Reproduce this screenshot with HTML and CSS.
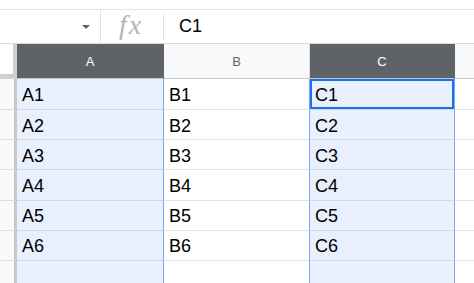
FILE: index.html
```html
<!DOCTYPE html>
<html>
<head>
<meta charset="utf-8">
<link rel="stylesheet" href="styles.css">
</head>
<body>
<div class="fbar">
  <div class="namebox"><span class="caret"></span></div>
  <div class="fxbox"><span class="fx">fx</span><span class="sep"></span></div>
  <div class="formula">C1</div>
</div>
<div class="grid">
  <div class="corner"></div>
  <div class="hd sel">A</div>
  <div class="hd">B</div>
  <div class="hd sel">C</div>
  <div class="hd rest"></div>

  <div class="rh"></div><div class="cell ca">A1</div><div class="cell cb">B1</div><div class="cell cc active">C1</div><div class="cell cr"></div>
  <div class="rh"></div><div class="cell ca">A2</div><div class="cell cb">B2</div><div class="cell cc">C2</div><div class="cell cr"></div>
  <div class="rh"></div><div class="cell ca">A3</div><div class="cell cb">B3</div><div class="cell cc">C3</div><div class="cell cr"></div>
  <div class="rh"></div><div class="cell ca">A4</div><div class="cell cb">B4</div><div class="cell cc">C4</div><div class="cell cr"></div>
  <div class="rh"></div><div class="cell ca">A5</div><div class="cell cb">B5</div><div class="cell cc">C5</div><div class="cell cr"></div>
  <div class="rh"></div><div class="cell ca">A6</div><div class="cell cb">B6</div><div class="cell cc">C6</div><div class="cell cr"></div>
  <div class="rh"></div><div class="cell ca"></div><div class="cell cb"></div><div class="cell cc"></div><div class="cell cr"></div>
</div>
</body>
</html>
```

FILE: styles.css
```css
* { box-sizing: border-box; }
html, body {
  margin: 0;
  padding: 0;
  width: 474px;
  height: 283px;
  overflow: hidden;
  background: #fff;
  font-family: "Liberation Sans", Arial, sans-serif;
}

.fbar {
  margin-top: 9px;
  height: 35px;
  border-top: 1px solid #e3e3e3;
  border-bottom: 1px solid #dadce0;
  display: flex;
  align-items: stretch;
}
.namebox {
  width: 101px;
  border-right: 1px solid #e3e3e3;
  display: flex;
  align-items: center;
  justify-content: flex-end;
  padding-right: 10px;
}
.caret {
  width: 0;
  height: 0;
  border-left: 4.5px solid transparent;
  border-right: 4.5px solid transparent;
  border-top: 4.5px solid #5f6368;
  margin-top: 1px;
}
.fxbox {
  width: 63px;
  display: flex;
  align-items: center;
  justify-content: space-between;
  padding-left: 18px;
}
.fx {
  font-family: "Liberation Serif", "Times New Roman", serif;
  font-style: italic;
  font-size: 28px;
  color: #b4b4b4;
  letter-spacing: 2px;
  line-height: 1;
  margin-top: -3px;
}
.sep {
  width: 1px;
  height: 26px;
  background: #e3e3e3;
}
.formula {
  padding-left: 15px;
  display: flex;
  align-items: center;
  font-size: 18px;
  color: #000;
}

.grid {
  display: grid;
  grid-template-columns: 17px 147px 146px 145px 1fr;
  grid-template-rows: 35px 31px repeat(6, 30.2px) 1fr;
  height: 239px;
}
.corner {
  background: #fff;
  border-right: 4px solid #cfcfcf;
  border-bottom: 5px solid #cfcfcf;
}
.hd {
  background: #f8f9fa;
  color: #5f6368;
  font-size: 13px;
  display: flex;
  align-items: center;
  justify-content: center;
  border-bottom: 1px solid #c4c7c5;
  border-right: 1px solid #dadce0;
  padding-top: 1px;
}
.hd.sel {
  background: #5f6368;
  color: #fff;
  border-right-color: #5f6368;
}
.hd.rest {
  border-right: none;
}
.rh {
  background: #f8f9fa;
  border-right: 3px solid #c8c8c8;
  border-bottom: 1px solid #dcdcdc;
}
.cell {
  font-size: 18px;
  color: #000;
  display: flex;
  align-items: center;
  padding-left: 5px;
  padding-top: 3px;
  border-bottom: 1px solid #e2e2e2;
  border-right: 1px solid #e2e2e2;
}
.ca, .cc {
  background: #e8effd;
  border-bottom-color: #d2d8e4;
  border-right-color: #7fa4ea;
}
.cb {
  border-right-color: #7fa4ea;
}
.cr {
  border-right: none;
}
.active {
  box-shadow: inset 0 0 0 2px #1a73e8;
}
```
